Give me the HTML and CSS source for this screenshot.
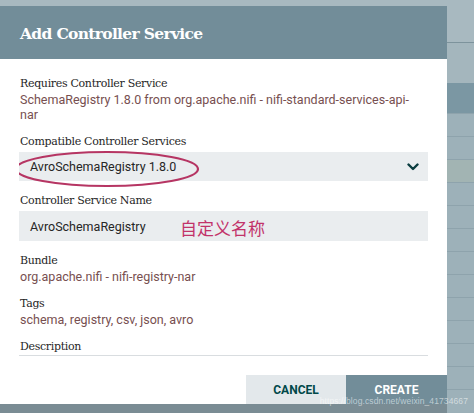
FILE: index.html
```html
<!DOCTYPE html>
<html>
<head>
<meta charset="utf-8">
<link rel="stylesheet" href="styles.css">
</head>
<body>
<div class="backdrop">
  <div class="bd-top"></div>
  <div class="bd-gap"></div>
  <div class="bd-head"></div>
  <div class="bd-row"></div>
  <div class="bd-row"></div>
  <div class="bd-row tint"></div>
  <div class="bd-row"></div>
  <div class="bd-row"></div>
  <div class="bd-row"></div>
  <div class="bd-row"></div>
  <div class="bd-row"></div>
  <div class="bd-row"></div>
  <div class="bd-row"></div>
  <div class="bd-row"></div>
  <div class="bd-row"></div>
  <div class="bd-row"></div>
</div>

<div class="dialog">
  <div class="dialog-header">
    <span class="dialog-title">Add Controller Service</span>
  </div>
  <div class="dialog-body">
    <div class="field">
      <div class="label">Requires Controller Service</div>
      <div class="value">SchemaRegistry 1.8.0 from org.apache.nifi - nifi-standard-services-api-nar</div>
    </div>
    <div class="field">
      <div class="label">Compatible Controller Services</div>
      <div class="box select">
        <span>AvroSchemaRegistry 1.8.0</span>
        <svg class="chevron" width="12" height="8" viewBox="0 0 12 8"><path d="M1.5 1.5 L6 6 L10.5 1.5" fill="none" stroke="#0b3d40" stroke-width="2.4" stroke-linecap="round" stroke-linejoin="round"/></svg>
        <svg class="annot" width="186" height="38" viewBox="0 0 186 38"><ellipse cx="93" cy="19" rx="91" ry="17" fill="none" stroke="#b63563" stroke-width="2.2"/></svg>
      </div>
    </div>
    <div class="field">
      <div class="label">Controller Service Name</div>
      <div class="box input">
        <span class="input-text">AvroSchemaRegistry</span>
        <span class="note">自定义名称</span>
      </div>
    </div>
    <div class="field">
      <div class="label">Bundle</div>
      <div class="value">org.apache.nifi - nifi-registry-nar</div>
    </div>
    <div class="field">
      <div class="label">Tags</div>
      <div class="value">schema, registry, csv, json, avro</div>
    </div>
    <div class="field">
      <div class="label">Description</div>
    </div>
  </div>
  <div class="dialog-footer">
    <button class="btn btn-cancel">CANCEL</button>
    <button class="btn btn-create">CREATE</button>
  </div>
</div>
<div class="watermark">https://blog.csdn.net/weixin_41734667</div>
</body>
</html>
```

FILE: styles.css
```css
html, body {
  margin: 0;
  padding: 0;
}
body {
  width: 474px;
  height: 413px;
  overflow: hidden;
  position: relative;
  background: #9cb0b8;
  font-family: Roboto, "Liberation Sans", sans-serif;
}
.backdrop {
  display: flex;
  flex-direction: column;
}
.bd-top {
  height: 42px;
  background: #a8b9c0;
  border-bottom: 1px solid #7d939c;
}
.bd-gap {
  height: 40px;
  background: #a4b6bd;
}
.bd-head {
  height: 30px;
  background: #7b97a3;
}
.bd-row {
  height: 22px;
  background: #9db1b9;
  border-top: 1px solid #8ea3ac;
}
.bd-row.tint {
  background: #a2b4b3;
}
.dialog {
  position: absolute;
  left: 0;
  top: 6px;
  width: 447px;
  height: 398px;
  background: #ffffff;
  display: flex;
  flex-direction: column;
  box-shadow: 0 9px 0 0 #7a8c94;
}
.dialog-header {
  height: 53px;
  background: #728d99;
  display: flex;
  align-items: center;
  padding-left: 20px;
  flex-shrink: 0;
}
.dialog-title {
  color: #ffffff;
  font-family: "DejaVu Serif", "Liberation Serif", serif;
  font-weight: bold;
  font-size: 15.5px;
  letter-spacing: -0.68px;
  padding-top: 1px;
}
.dialog-body {
  margin: 0 19px;
  padding: 17px 0 0 1px;
  height: 279px;
  overflow: hidden;
  border-bottom: 1px solid #d9dde0;
  flex-shrink: 0;
}
.field {
  margin-bottom: 12px;
}
.label {
  font-family: "DejaVu Serif", "Liberation Serif", serif;
  font-size: 11px;
  line-height: 16px;
  letter-spacing: -0.32px;
  color: #262626;
}
.value {
  font-size: 12.5px;
  line-height: 15px;
  color: #774f50;
  padding-right: 10px;
}
.box {
  margin: 2px 0 0 -1px;
  background: #eaedef;
  display: flex;
  align-items: center;
  padding-left: 11px;
  font-size: 12.5px;
  color: #262626;
  position: relative;
}
.select {
  height: 29px;
  margin-bottom: 1px;
}
.input {
  height: 30px;
  margin-bottom: 1px;
}
.chevron {
  position: absolute;
  right: 9px;
  top: 11px;
}
.annot {
  position: absolute;
  left: -5px;
  top: -2px;
}
.input-text {
  width: 150px;
}
.note {
  color: #c2336a;
  font-family: "Noto Sans CJK SC", sans-serif;
  font-size: 17px;
  margin-top: 2px;
}
.dialog-footer {
  flex: 1;
  display: flex;
  justify-content: flex-end;
  align-items: flex-end;
}
.btn {
  border: none;
  margin: 0;
  height: 29px;
  font-family: Roboto, "Liberation Sans", sans-serif;
  font-weight: bold;
  font-size: 12px;
  padding: 0;
  padding-top: 1px;
}
.btn-cancel {
  width: 100px;
  background: #e3e8eb;
  color: #004849;
}
.btn-create {
  width: 101px;
  background: #728d99;
  color: #ffffff;
}
.watermark {
  position: absolute;
  right: 6px;
  top: 396px;
  font-family: "Liberation Sans", sans-serif;
  font-size: 8.5px;
  color: rgba(255, 255, 255, 0.55);
  letter-spacing: 0.1px;
}
```
